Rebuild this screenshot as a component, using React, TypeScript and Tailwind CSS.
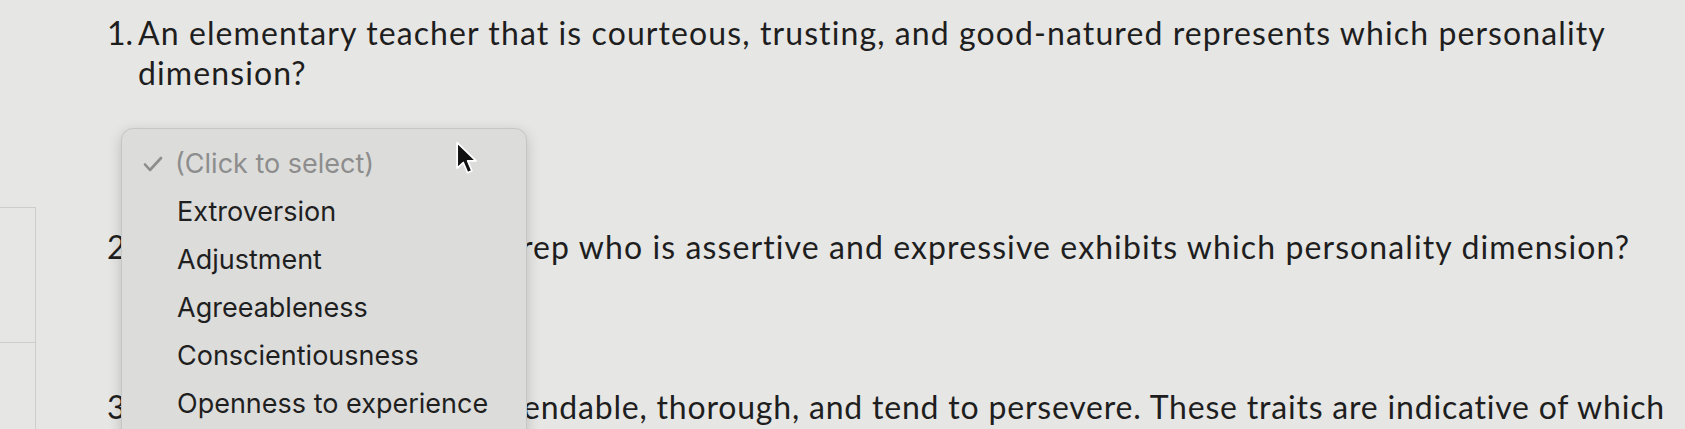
import React from "react";

const options = [
  "Extroversion",
  "Adjustment",
  "Agreeableness",
  "Conscientiousness",
  "Openness to experience",
];

function Cursor() {
  return (
    <svg width="26" height="37" viewBox="0 0 24 34" className="absolute left-[333px] top-[12px]">
      <path
        d="M2 1.5 L2 25 L7.6 19.8 L11.6 29.2 L15.6 27.4 L11.7 18.2 L19.4 18.2 Z"
        fill="#111"
        stroke="#fff"
        strokeWidth="1.6"
        strokeLinejoin="round"
      />
    </svg>
  );
}

function Menu() {
  return (
    <div className="absolute left-[121px] top-[128px] w-[406px] h-[340px] rounded-[12px] bg-[#dcdcdb] border border-[#c6c6c5] shadow-[0_4px_14px_rgba(0,0,0,0.18)] pt-[11px] font-['Inter',sans-serif] text-[27px]">
      <Cursor />
      <div className="flex items-center h-[48px] text-[#8d8d8d]">
        <span className="w-[53px] pl-[21px] flex items-center">
          <svg width="20" height="16" viewBox="0 0 20 16">
            <path d="M2 8.5 L7 14 L18 2" fill="none" stroke="#8d8d8d" strokeWidth="2.6" strokeLinecap="round" strokeLinejoin="round" />
          </svg>
        </span>
        <span>(Click to select)</span>
      </div>
      {options.map((o) => (
        <div key={o} className="flex items-center h-[48px] pl-[55px] text-[#1f1f1f]">
          {o}
        </div>
      ))}
    </div>
  );
}

function Question({ n, children, gap }: { n: string; children: React.ReactNode; gap: string }) {
  return (
    <div className={gap}>
      <div className="flex">
        <span className="w-[31px] shrink-0 tracking-normal">{n}</span>
        <div>{children}</div>
      </div>
    </div>
  );
}

export default function App() {
  return (
    <div className="relative w-[1685px] h-[429px] overflow-hidden bg-[#e6e6e4] flex">
      <div className="w-[36px] shrink-0 pt-[207px] flex flex-col">
        <div className="h-[135px] border-t border-r border-[#cdcdcb]" />
        <div className="flex-1 border-t border-r border-[#cdcdcb]" />
      </div>
      <div className="pl-[71px] pt-[13px] font-['Lato',sans-serif] text-[32px] tracking-[1.1px] leading-[40px] text-[#1e1e1e] whitespace-nowrap">
        <Question n="1." gap="mb-[134px]">
          <div>An elementary teacher that is courteous, trusting, and good-natured represents which personality</div>
          <div>dimension?</div>
        </Question>
        <Question n="2" gap="mb-[120px]">
          <span className="inline-block w-[383px] overflow-hidden align-bottom">A successful sales </span>
          rep who is assertive and expressive exhibits which personality dimension?
        </Question>
        <Question n="3" gap="">
          <span className="inline-block w-[385px] overflow-hidden align-bottom">Employees who are dep</span>
          <span className="tracking-[0.8px]">endable, thorough, and tend to persevere. These traits are indicative of which</span>
        </Question>
      </div>
      <Menu />
    </div>
  );
}
